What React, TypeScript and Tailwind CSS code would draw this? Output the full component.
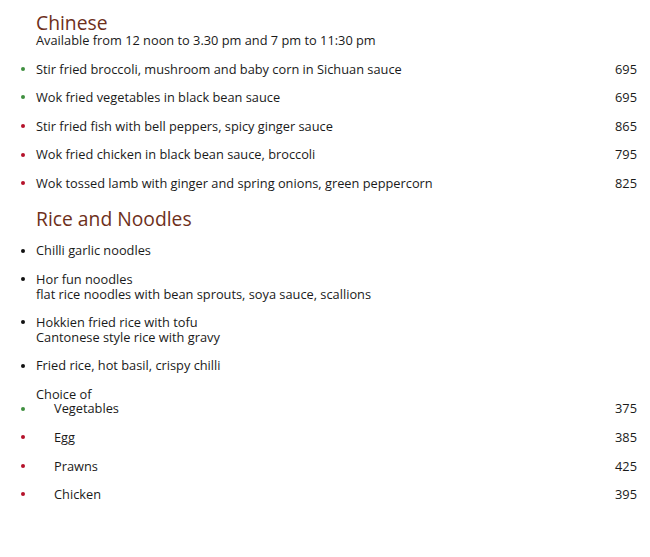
import React from "react";

type Item = { text: string[]; price?: string; dot: "green" | "red" | "black"; indent?: boolean };

const dotColor = {
  green: "bg-[#3f8f3f]",
  red: "bg-[#b5122b]",
  black: "bg-[#111111]",
};

function Row({ item }: { item: Item }) {
  return (
    <div className="flex items-start pl-[21px] pr-[13px] mb-[14.1px]">
      <div className="w-[15px] h-[14.5px] flex items-center shrink-0">
        <span className={`block w-[4px] h-[4px] rounded-full ${dotColor[item.dot]}`} />
      </div>
      <div className={`flex-1 ${item.indent ? "pl-[18px]" : ""}`}>
        {item.text.map((t, i) => (
          <div key={i}>{t}</div>
        ))}
      </div>
      {item.price && <div className="shrink-0 text-right">{item.price}</div>}
    </div>
  );
}

const chinese: Item[] = [
  { text: ["Stir fried broccoli, mushroom and baby corn in Sichuan sauce"], price: "695", dot: "green" },
  { text: ["Wok fried vegetables in black bean sauce"], price: "695", dot: "green" },
  { text: ["Stir fried fish with bell peppers, spicy ginger sauce"], price: "865", dot: "red" },
  { text: ["Wok fried chicken in black bean sauce, broccoli"], price: "795", dot: "red" },
  { text: ["Wok tossed lamb with ginger and spring onions, green peppercorn"], price: "825", dot: "red" },
];

const rice: Item[] = [
  { text: ["Chilli garlic noodles"], dot: "black" },
  { text: ["Hor fun noodles", "flat rice noodles with bean sprouts, soya sauce, scallions"], dot: "black" },
  { text: ["Hokkien fried rice with tofu", "Cantonese style rice with gravy"], dot: "black" },
  { text: ["Fried rice, hot basil, crispy chilli"], dot: "black" },
];

const choice: Item[] = [
  { text: ["Egg"], price: "385", dot: "red", indent: true },
  { text: ["Prawns"], price: "425", dot: "red", indent: true },
  { text: ["Chicken"], price: "395", dot: "red", indent: true },
];

export default function App() {
  return (
    <div
      className="w-[650px] h-[557px] bg-white text-[#1a1a1a] text-[12.8px] leading-[14.5px] pt-[13px]"
      style={{ fontFamily: "'Open Sans', 'Noto Sans', sans-serif" }}
    >
      <div className="pl-[36px] text-[19.3px] leading-[20px] text-[#6e2f1b]">Chinese</div>
      <div className="pl-[36px] mb-[14.1px]">Available from 12 noon to 3.30 pm and 7 pm to 11:30 pm</div>
      {chinese.map((it, i) => (
        <Row key={i} item={it} />
      ))}
      <div className="pl-[36px] text-[19.3px] leading-[22px] text-[#6e2f1b] mt-[18px] mb-[13px]">Rice and Noodles</div>
      {rice.map((it, i) => (
        <Row key={i} item={it} />
      ))}
      <div className="pl-[36px]">Choice of</div>
      <Row item={{ text: ["Vegetables"], price: "375", dot: "green", indent: true }} />
      {choice.map((it, i) => (
        <Row key={i} item={it} />
      ))}
    </div>
  );
}
